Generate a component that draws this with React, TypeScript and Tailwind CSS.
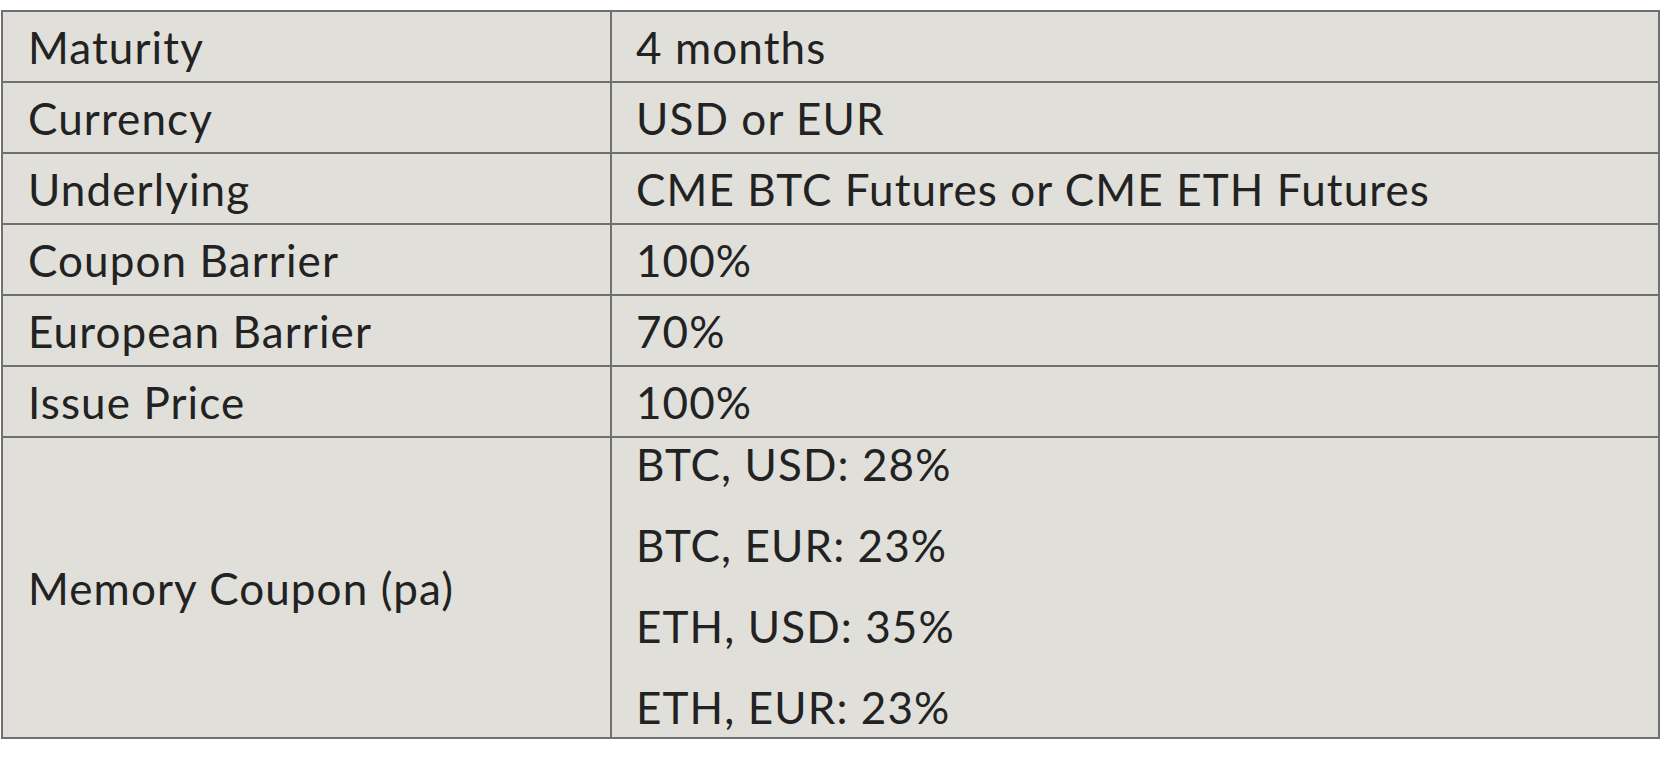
import React from "react";

const rows: { label: string; value: string }[] = [
  { label: "Maturity", value: "4 months" },
  { label: "Currency", value: "USD or EUR" },
  { label: "Underlying", value: "CME BTC Futures or CME ETH Futures" },
  { label: "Coupon Barrier", value: "100%" },
  { label: "European Barrier", value: "70%" },
  { label: "Issue Price", value: "100%" },
];

const coupons = [
  "BTC, USD: 28%",
  "BTC, EUR: 23%",
  "ETH, USD: 35%",
  "ETH, EUR: 23%",
];

export default function App() {
  return (
    <div className="w-[1668px] h-[770px] bg-white pt-[10px] pl-[1px] font-['Lato',sans-serif] text-[44px] tracking-[1.1px] text-[#222222]">
      <div className="w-[1659px] border-2 border-[#707070] bg-[#e0dfda]">
        {rows.map((r) => (
          <div key={r.label} className="flex h-[71px] border-b-2 border-[#707070]">
            <div className="w-[607px] pl-[25px] flex items-center leading-none">
              {r.label}
            </div>
            <div className="flex-1 border-l-2 border-[#707070] pl-[24px] flex items-center leading-none">
              {r.value}
            </div>
          </div>
        ))}
        <div className="flex h-[299px]">
          <div className="w-[607px] pl-[25px] flex items-center leading-none">
            Memory Coupon (pa)
          </div>
          <div className="flex-1 border-l-2 border-[#707070] pl-[24px] pt-[3px] flex flex-col gap-[35px] leading-[46px]">
            {coupons.map((c) => (
              <div key={c}>{c}</div>
            ))}
          </div>
        </div>
      </div>
    </div>
  );
}
